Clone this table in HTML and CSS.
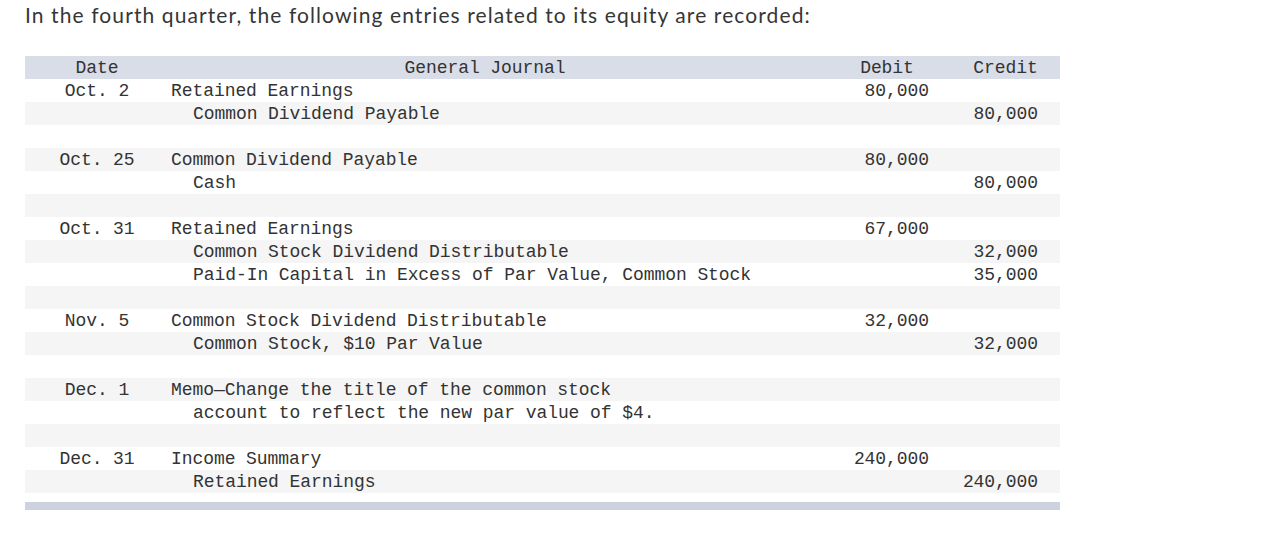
FILE: index.html
```html
<!DOCTYPE html>
<html>
<head>
<meta charset="utf-8">
<link rel="stylesheet" href="styles.css">
</head>
<body>
<div class="page">
  <p class="intro">In the fourth quarter, the following entries related to its equity are recorded:</p>
  <div class="journal">
    <div class="row head">
      <div class="c date">Date</div>
      <div class="c acct title">General Journal</div>
      <div class="c amt hd">Debit</div>
      <div class="c amt hd">Credit</div>
    </div>

    <div class="row"><div class="c date">Oct. 2</div><div class="c acct">Retained Earnings</div><div class="c amt">80,000</div><div class="c amt"></div></div>
    <div class="row"><div class="c date"></div><div class="c acct ind">Common Dividend Payable</div><div class="c amt"></div><div class="c amt">80,000</div></div>
    <div class="row"><div class="c date"></div><div class="c acct"></div><div class="c amt"></div><div class="c amt"></div></div>

    <div class="row"><div class="c date">Oct. 25</div><div class="c acct">Common Dividend Payable</div><div class="c amt">80,000</div><div class="c amt"></div></div>
    <div class="row"><div class="c date"></div><div class="c acct ind">Cash</div><div class="c amt"></div><div class="c amt">80,000</div></div>
    <div class="row"><div class="c date"></div><div class="c acct"></div><div class="c amt"></div><div class="c amt"></div></div>

    <div class="row"><div class="c date">Oct. 31</div><div class="c acct">Retained Earnings</div><div class="c amt">67,000</div><div class="c amt"></div></div>
    <div class="row"><div class="c date"></div><div class="c acct ind">Common Stock Dividend Distributable</div><div class="c amt"></div><div class="c amt">32,000</div></div>
    <div class="row"><div class="c date"></div><div class="c acct ind">Paid-In Capital in Excess of Par Value, Common Stock</div><div class="c amt"></div><div class="c amt">35,000</div></div>
    <div class="row"><div class="c date"></div><div class="c acct"></div><div class="c amt"></div><div class="c amt"></div></div>

    <div class="row"><div class="c date">Nov. 5</div><div class="c acct">Common Stock Dividend Distributable</div><div class="c amt">32,000</div><div class="c amt"></div></div>
    <div class="row"><div class="c date"></div><div class="c acct ind">Common Stock, $10 Par Value</div><div class="c amt"></div><div class="c amt">32,000</div></div>
    <div class="row"><div class="c date"></div><div class="c acct"></div><div class="c amt"></div><div class="c amt"></div></div>

    <div class="row"><div class="c date">Dec. 1</div><div class="c acct">Memo—Change the title of the common stock</div><div class="c amt"></div><div class="c amt"></div></div>
    <div class="row"><div class="c date"></div><div class="c acct ind">account to reflect the new par value of $4.</div><div class="c amt"></div><div class="c amt"></div></div>
    <div class="row"><div class="c date"></div><div class="c acct"></div><div class="c amt"></div><div class="c amt"></div></div>

    <div class="row"><div class="c date">Dec. 31</div><div class="c acct">Income Summary</div><div class="c amt">240,000</div><div class="c amt"></div></div>
    <div class="row"><div class="c date"></div><div class="c acct ind">Retained Earnings</div><div class="c amt"></div><div class="c amt">240,000</div></div>

    <div class="spacer"></div>
    <div class="foot"></div>
  </div>
</div>
</body>
</html>
```

FILE: styles.css
```css
html, body {
  margin: 0;
  padding: 0;
  background: #ffffff;
}

.page {
  padding: 0 25px;
}

.intro {
  margin: 0;
  padding-top: 3px;
  height: 56px;
  box-sizing: border-box;
  font-family: Lato, sans-serif;
  font-size: 21px;
  line-height: 24px;
  letter-spacing: 1.1px;
  color: #363636;
}

.journal {
  width: 1035px;
  font-family: "Liberation Mono", monospace;
  font-size: 18px;
  letter-spacing: -0.07px;
  color: #333333;
}

.row {
  display: grid;
  grid-template-columns: 144px 654px 128px 109px;
  height: 23px;
  white-space: pre;
}

.row:nth-child(odd) {
  background: #f5f5f5;
}

.row:nth-child(even) {
  background: #ffffff;
}

.row.head {
  background: #d9dde7;
}

.c {
  padding-top: 2px;
  line-height: 21px;
}

.date {
  text-align: center;
}

.acct {
  padding-left: 2px;
}

.acct.ind {
  padding-left: 24px;
}

.acct.title {
  padding-left: 0;
  padding-right: 22px;
  text-align: center;
}

.amt {
  text-align: right;
  padding-right: 22px;
}

.amt.hd {
  text-align: center;
  padding-right: 0;
}

.spacer {
  height: 9px;
}

.foot {
  height: 8px;
  background: #ccd3df;
}
```
